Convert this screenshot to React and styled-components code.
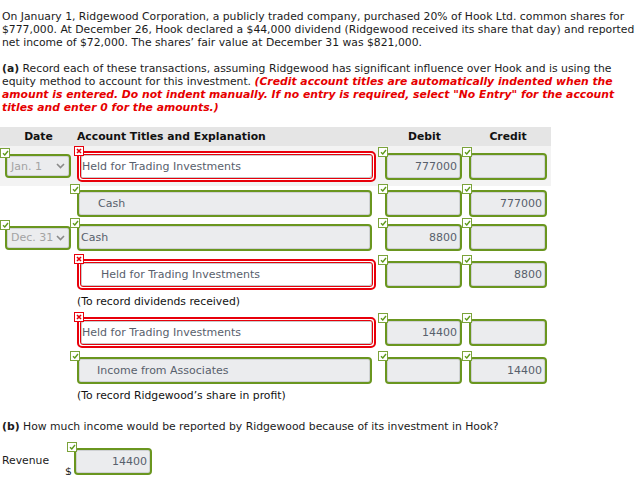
import React from "react";
import styled, { createGlobalStyle } from "styled-components";

const Global = createGlobalStyle`
  html, body { margin: 0; padding: 0; background: #fff; }
  body { font-family: "DejaVu Sans", Verdana, sans-serif; font-size: 10.8px; color: #1b1b1b; }
`;

const Page = styled.div`
  width: 641px;
  padding: 10px 0 0 2px;
  box-sizing: border-box;
`;

const Para = styled.p`
  margin: 0 0 13px 0;
  line-height: 13px;
  white-space: nowrap;
`;

const Warn = styled.span`
  color: #e60000;
  font-weight: bold;
  font-style: italic;
`;

const Table = styled.div`
  width: 551px;
  margin-left: -2px;
`;

const Header = styled.div`
  display: grid;
  grid-template-columns: 77px 303px 85px 86px;
  height: 19px;
  align-items: center;
  background: #e5e5e5;
  font-weight: bold;
  color: #111;
`;

const HeadCell = styled.div`
  text-align: ${(p) => p.$align || "left"};
  padding-left: ${(p) => p.$pl || 0}px;
`;

const Row = styled.div`
  display: grid;
  grid-template-columns: 77px 303px 85px 86px;
  align-items: center;
  height: ${(p) => p.$h}px;
  background: ${(p) => (p.$shade ? "#f3f3f3" : "transparent")};
`;

const Note = styled.div`
  padding: ${(p) => p.$pt}px 0 0 77px;
  height: ${(p) => p.$h}px;
  box-sizing: border-box;
  line-height: 13px;
  color: #111;
`;

const Slot = styled.div`
  position: relative;
  margin-left: ${(p) => p.$ml || 0}px;
  width: ${(p) => p.$w}px;
`;

const GreenField = styled.div`
  height: 27px;
  box-sizing: border-box;
  border: 2px solid #6a961f;
  border-radius: 4px;
  background: #ebecee;
  box-shadow: inset 0 0 0 1px #cfd1d4;
  display: flex;
  align-items: center;
  justify-content: ${(p) => (p.$right ? "flex-end" : "flex-start")};
  padding: 0 ${(p) => (p.$right ? 3 : 0)}px 0 ${(p) => p.$indent || 3}px;
  color: #58606c;
  font-size: 11px;
`;

const RedField = styled.div`
  height: 31px;
  box-sizing: border-box;
  border: 2px solid #e8000b;
  border-radius: 5px;
  padding: 1px;
  background: #fff;
`;

const RedInner = styled.div`
  height: 100%;
  box-sizing: border-box;
  border: 1px solid #e8000b;
  border-radius: 3px;
  box-shadow: inset 1px 1px 0 #c9c9c9, inset -1px -1px 0 #c9c9c9;
  background: #fff;
  display: flex;
  align-items: center;
  padding-left: ${(p) => p.$indent || 1}px;
  color: #58606c;
  font-size: 11px;
`;

const Select = styled.div`
  height: 24px;
  box-sizing: border-box;
  border: 2px solid #6a961f;
  border-radius: 4px;
  background: #ebecee;
  box-shadow: inset 0 0 0 1px #cfd1d4;
  display: flex;
  align-items: center;
  justify-content: space-between;
  padding: 0 4px 0 4px;
  color: #a3a3a3;
  font-size: 11px;
`;

const Badge = styled.span`
  position: absolute;
  left: ${(p) => p.$x}px;
  top: ${(p) => p.$y}px;
  width: 10px;
  height: 10px;
  box-sizing: border-box;
  border: 1px solid ${(p) => (p.$bad ? "#e8000b" : "#7ba33a")};
  background: #fff;
  display: flex;
  align-items: center;
  justify-content: center;
`;

const Section = styled.p`
  margin: 18px 0 0 0;
  line-height: 13px;
`;

const Revenue = styled.div`
  display: flex;
  align-items: flex-end;
  margin-top: 15px;
`;

const RevLabel = styled.span`
  width: 63px;
  line-height: 13px;
  padding-bottom: 8px;
  align-self: flex-end;
`;

const Dollar = styled.span`
  width: 9px;
  line-height: 13px;
  margin-bottom: -3px;
`;

const Check = () => (
  <svg width="7" height="6" viewBox="0 0 7 6">
    <path d="M1 3.2 L2.8 5 L6 1" fill="none" stroke="#5f9a1c" strokeWidth="1.4" />
  </svg>
);

const Cross = () => (
  <svg width="6" height="6" viewBox="0 0 6 6">
    <path d="M1 1 L5 5 M5 1 L1 5" fill="none" stroke="#e8000b" strokeWidth="1.6" />
  </svg>
);

const Chevron = () => (
  <svg width="9" height="6" viewBox="0 0 9 6">
    <path d="M1 1 L4.5 4.5 L8 1" fill="none" stroke="#8a8a8a" strokeWidth="1.6" />
  </svg>
);

const Ok = ({ x = -7, y = -6 }) => (
  <Badge $x={x} $y={y}>
    <Check />
  </Badge>
);

const Bad = () => (
  <Badge $bad $x={-3} $y={-5}>
    <Cross />
  </Badge>
);

const DateCell = ({ value }) => (
  <Slot $ml={5} $w={66}>
    <Select>
      <span>{value}</span>
      <Chevron />
    </Select>
    <Ok x={-5} y={-6} />
  </Slot>
);

const Account = ({ text, bad, indent }) =>
  bad ? (
    <Slot $w={299}>
      <RedField>
        <RedInner $indent={indent}>{text}</RedInner>
      </RedField>
      <Bad />
    </Slot>
  ) : (
    <Slot $w={295}>
      <GreenField $indent={indent}>{text}</GreenField>
      <Ok />
    </Slot>
  );

const Amount = ({ value, credit }) => (
  <Slot $ml={credit ? 4 : 5} $w={credit ? 78 : 77}>
    <GreenField $right>{value}</GreenField>
    <Ok />
  </Slot>
);

export default function App() {
  return (
    <Page>
      <Global />
      <Para>
        On January 1, Ridgewood Corporation, a publicly traded company, purchased 20% of Hook Ltd. common shares for
        <br />
        $777,000. At December 26, Hook declared a $44,000 dividend (Ridgewood received its share that day) and reported
        <br />
        net income of $72,000. The shares’ fair value at December 31 was $821,000.
      </Para>
      <Para>
        <b>(a)</b> Record each of these transactions, assuming Ridgewood has significant influence over Hook and is using the
        <br />
        equity method to account for this investment.{" "}
        <Warn>
          (Credit account titles are automatically indented when the
          <br />
          amount is entered. Do not indent manually. If no entry is required, select "No Entry" for the account
          <br />
          titles and enter 0 for the amounts.)
        </Warn>
      </Para>
      <Table>
        <Header>
          <HeadCell $align="center">Date</HeadCell>
          <HeadCell>Account Titles and Explanation</HeadCell>
          <HeadCell $align="center" $pl={4}>Debit</HeadCell>
          <HeadCell $align="center" $pl={0}>Credit</HeadCell>
        </Header>
        <Row $h={40} $shade>
          <DateCell value="Jan. 1" />
          <Account bad text="Held for Trading Investments" />
          <Amount value="777000" />
          <Amount credit value="" />
        </Row>
        <Row $h={34}>
          <div />
          <Account text="Cash" indent={19} />
          <Amount value="" />
          <Amount credit value="777000" />
        </Row>
        <Row $h={35}>
          <DateCell value="Dec. 31" />
          <Account text="Cash" indent={2} />
          <Amount value="8800" />
          <Amount credit value="" />
        </Row>
        <Row $h={38}>
          <div />
          <Account bad text="Held for Trading Investments" indent={20} />
          <Amount value="" />
          <Amount credit value="8800" />
        </Row>
        <Note $h={20} $pt={2}>(To record dividends received)</Note>
        <Row $h={39}>
          <div />
          <Account bad text="Held for Trading Investments" />
          <Amount value="14400" />
          <Amount credit value="" />
        </Row>
        <Row $h={37}>
          <div />
          <Account text="Income from Associates" indent={18} />
          <Amount value="" />
          <Amount credit value="14400" />
        </Row>
        <Note $h={13} $pt={0}>(To record Ridgewood’s share in profit)</Note>
      </Table>
      <Section>
        <b>(b)</b> How much income would be reported by Ridgewood because of its investment in Hook?
      </Section>
      <Revenue>
        <RevLabel>Revenue</RevLabel>
        <Dollar>$</Dollar>
        <Slot $w={78}>
          <GreenField $right>14400</GreenField>
          <Ok x={-7} y={-6} />
        </Slot>
      </Revenue>
    </Page>
  );
}
